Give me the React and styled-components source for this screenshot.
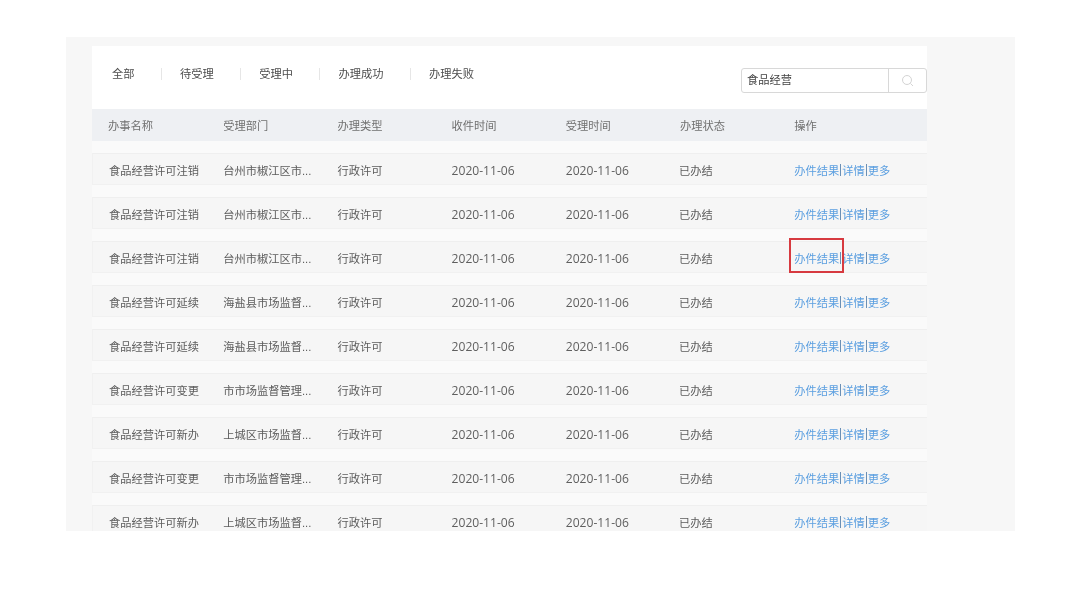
import React from "react";
import styled, { createGlobalStyle } from "styled-components";

const GlobalStyle = createGlobalStyle`
  html, body {
    margin: 0;
    background: #fff;
    font-family: "Liberation Sans", "Noto Sans CJK SC", sans-serif;
  }
`;

const Page = styled.div`
  width: 1080px;
  height: 597px;
  padding: 37px 65px 0 66px;
  box-sizing: border-box;
  overflow: hidden;
`;

const Panel = styled.div`
  height: 494px;
  padding: 9px 88px 0 26px;
  box-sizing: border-box;
  background: #f7f7f7;
  overflow: hidden;
  filter: blur(0.45px);
`;

const Toolbar = styled.div`
  height: 63px;
  background: #fff;
  display: flex;
  justify-content: space-between;
  padding: 22px 0 0 20px;
  box-sizing: border-box;
`;

const Tabs = styled.div`
  display: flex;
  height: 12px;
  align-items: center;
`;

const Tab = styled.span`
  font-size: 11.25px;
  line-height: 12px;
  color: #4d4d4d;
  white-space: nowrap;
  padding-right: 26px;
  margin-right: 18.5px;
  border-right: 1px solid #e6e6e6;

  &:last-child {
    border-right: 0;
    padding-right: 0;
    margin-right: 0;
  }
`;

const Search = styled.div`
  width: 186px;
  height: 25px;
  display: flex;
  border: 1px solid #d8d8d8;
  border-radius: 3px;
  box-sizing: border-box;
  background: #fff;
`;

const SearchText = styled.div`
  flex: 1;
  padding-left: 5px;
  font-size: 11.25px;
  line-height: 23px;
  color: #444;
`;

const SearchButton = styled.div`
  width: 37px;
  border-left: 1px solid #d8d8d8;
  display: flex;
  align-items: center;
  justify-content: center;
  color: #d4d4d4;
`;

const Grid = styled.div`
  display: grid;
  grid-template-columns: repeat(7, 114.2px);
  padding-left: 16px;
  align-items: center;
  font-size: 11.25px;
  color: #5c5c5c;
`;

const HeadRow = styled(Grid)`
  height: 32px;
  background: #eef0f3;
  color: #707070;
`;

const List = styled.div`
  background: #fafafa;
  padding-top: 12px;
`;

const Row = styled(Grid)`
  height: 32px;
  margin-bottom: 12px;
  background: #f6f6f6;
  border-top: 1px solid #efefef;
  border-bottom: 1px solid #f1f1f1;
  border-left: 1px solid #f1f1f1;
  padding-left: 15px;
  padding-top: 2px;
  box-sizing: border-box;
`;

const Cell = styled.div`
  white-space: nowrap;
  padding-left: 1px;
`;

const StatusCell = styled.div`
  white-space: nowrap;
`;

const HeadCell = styled.div`
  white-space: nowrap;

  & + & {
    padding-left: 1px;
  }
`;

const DateCell = styled.div`
  padding-left: 1px;
  font-family: "Open Sans", "Liberation Sans", sans-serif;
  font-size: 12.1px;
  color: #5f5f5f;
`;

const Actions = styled.div`
  display: flex;
  white-space: nowrap;
  padding-left: 1px;
  color: #5b9fe0;
  position: relative;
`;

const Divider = styled.i`
  width: 1px;
  height: 12px;
  margin: 2px 1px 0;
  background: #6a8fb5;
`;

const Mark = styled.div`
  position: absolute;
  left: -4px;
  top: -12px;
  width: 55px;
  height: 35px;
  border: 2px solid #d73a40;
  box-sizing: border-box;
`;

const rows = [
  ["食品经营许可注销", "台州市椒江区市..."],
  ["食品经营许可注销", "台州市椒江区市..."],
  ["食品经营许可注销", "台州市椒江区市...", true],
  ["食品经营许可延续", "海盐县市场监督..."],
  ["食品经营许可延续", "海盐县市场监督..."],
  ["食品经营许可变更", "市市场监督管理..."],
  ["食品经营许可新办", "上城区市场监督..."],
  ["食品经营许可变更", "市市场监督管理..."],
  ["食品经营许可新办", "上城区市场监督..."],
];

const tabs = ["全部", "待受理", "受理中", "办理成功", "办理失败"];
const heads = ["办事名称", "受理部门", "办理类型", "收件时间", "受理时间", "办理状态", "操作"];

const App = () => {
  return (
    <Page>
      <GlobalStyle />
      <Panel>
        <Toolbar>
          <Tabs>
            {tabs.map((t) => (
              <Tab key={t}>{t}</Tab>
            ))}
          </Tabs>
          <Search>
            <SearchText>食品经营</SearchText>
            <SearchButton>
              <svg width="13" height="13" viewBox="0 0 13 13" fill="none" stroke="currentColor" strokeWidth="1">
                <circle cx="6" cy="6" r="4.5" />
                <path d="M9.4 9.4 L12 12" />
              </svg>
            </SearchButton>
          </Search>
        </Toolbar>
        <HeadRow>
          {heads.map((h) => (
            <HeadCell key={h}>{h}</HeadCell>
          ))}
        </HeadRow>
        <List>
          {rows.map((r, i) => (
            <Row key={i}>
              <Cell>{r[0]}</Cell>
              <Cell>{r[1]}</Cell>
              <Cell>行政许可</Cell>
              <DateCell>2020-11-06</DateCell>
              <DateCell>2020-11-06</DateCell>
              <StatusCell>已办结</StatusCell>
              <Actions>
                办件结果
                <Divider />
                详情
                <Divider />
                更多
                {r[2] && <Mark />}
              </Actions>
            </Row>
          ))}
        </List>
      </Panel>
    </Page>
  );
};

export default App;
